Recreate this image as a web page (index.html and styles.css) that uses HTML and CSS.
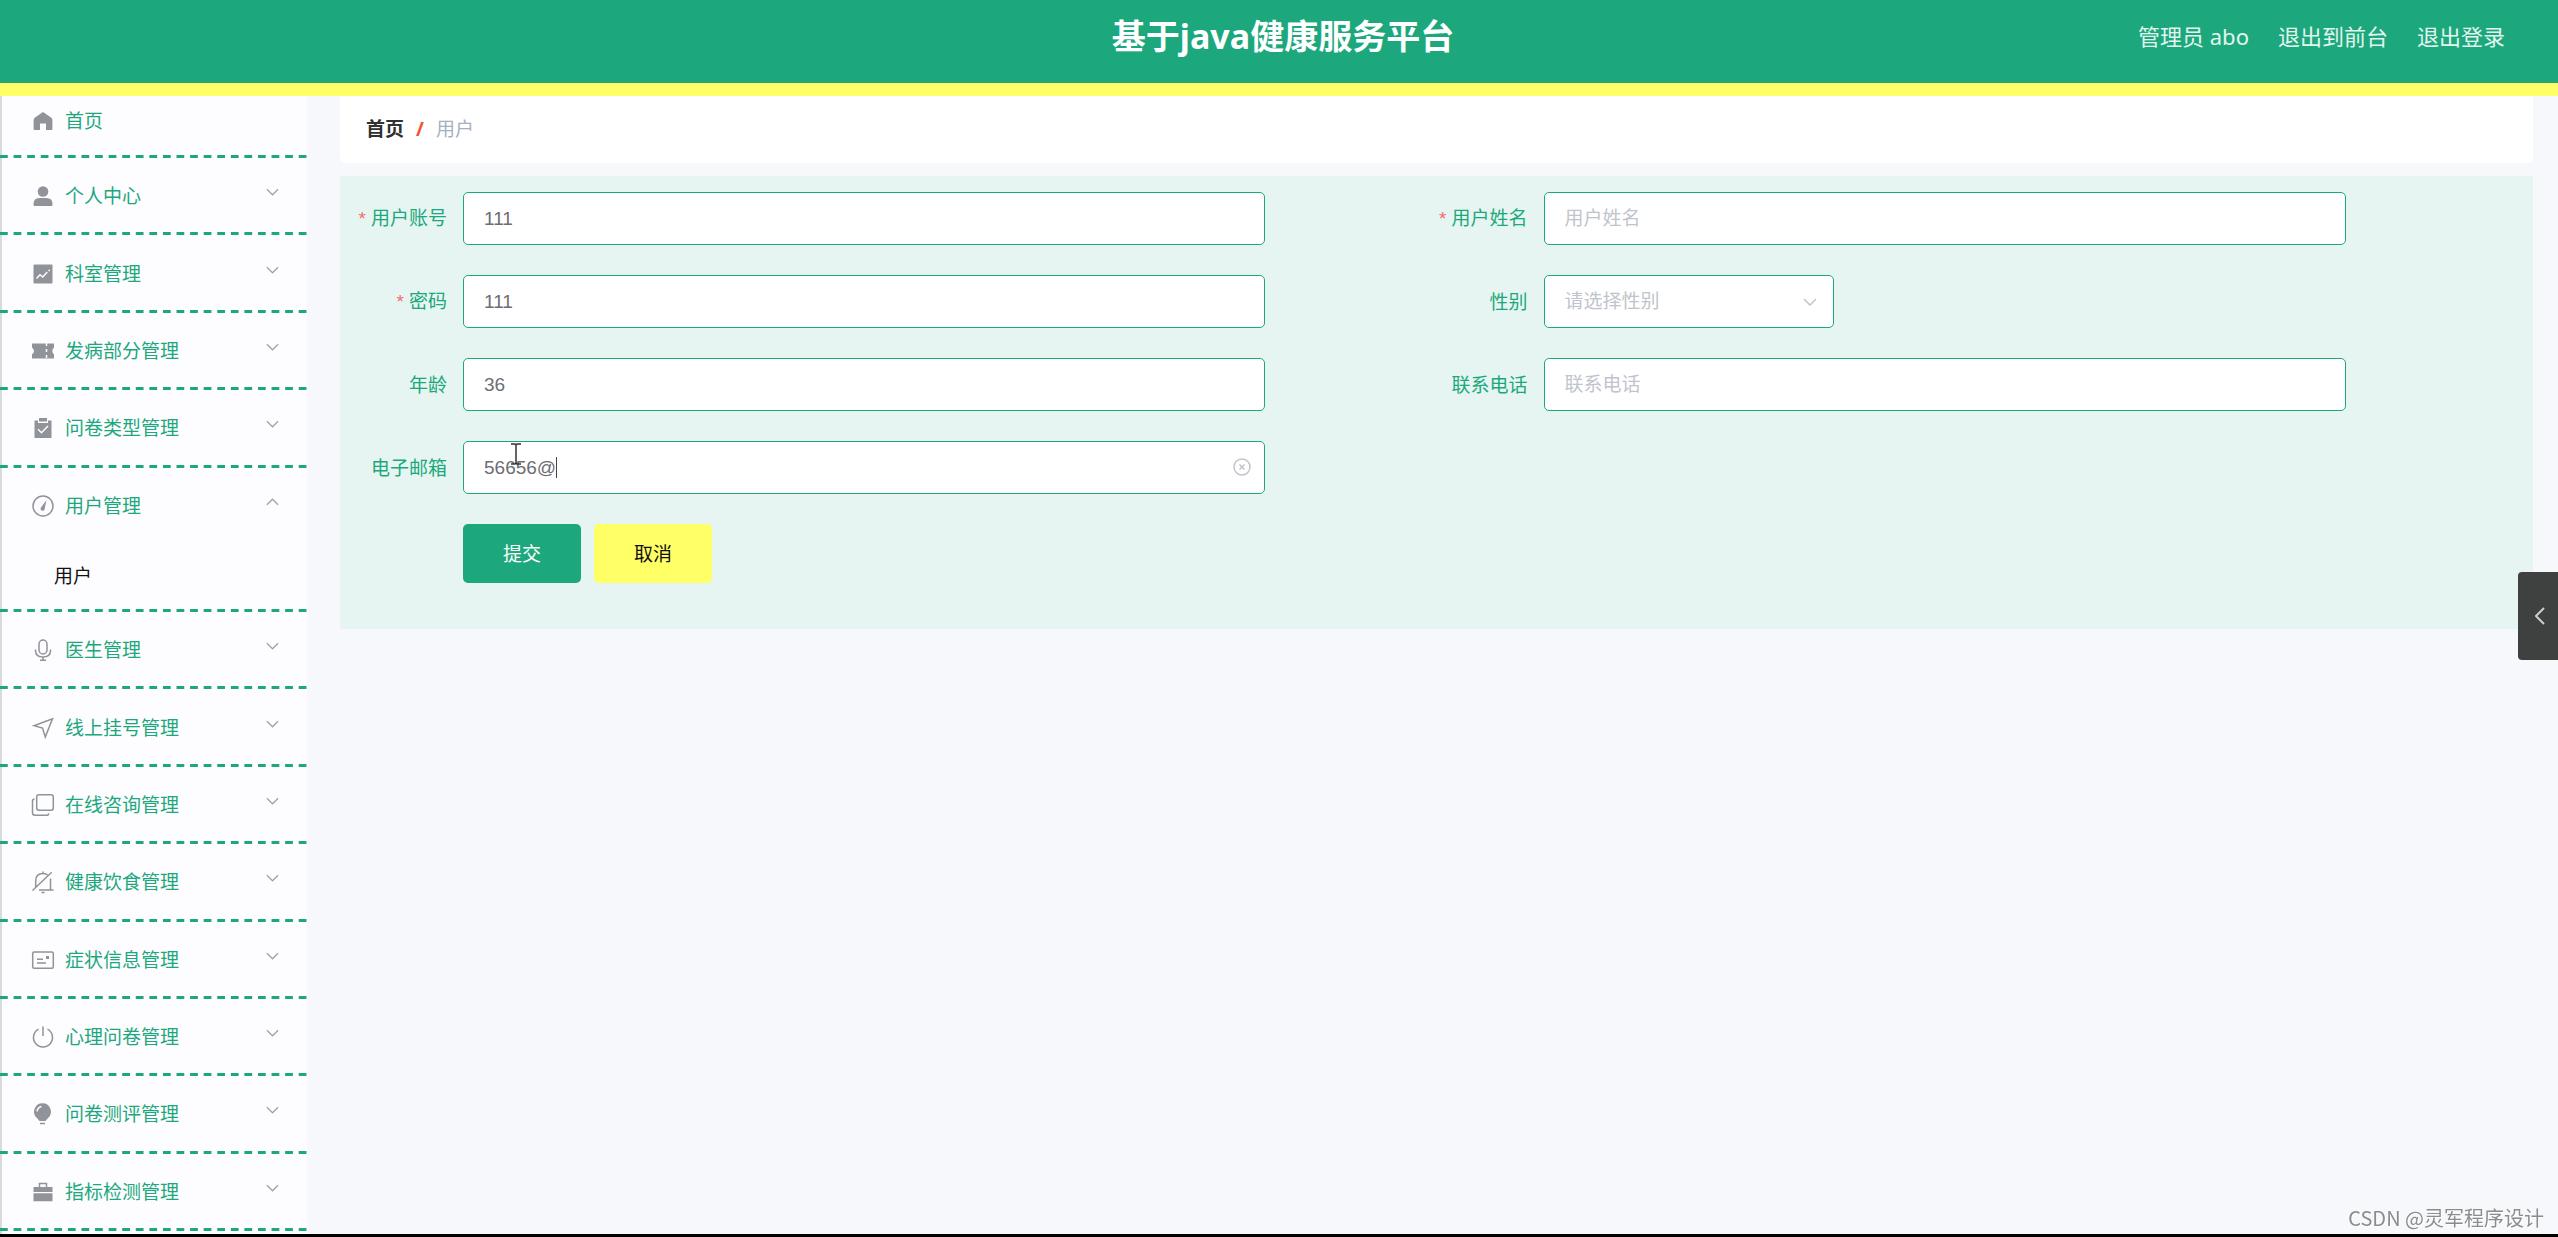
FILE: index.html
```html
<!DOCTYPE html>
<html lang="zh-CN">
  <head>
    <meta charset="utf-8">
    <title>基于java健康服务平台</title>
    <link rel="stylesheet" href="styles.css">
  </head>

  <body>

    <header class="navbar">
      <h1 class="title">基于java健康服务平台</h1>
      <div class="right-menu">
        <span>管理员 abo</span>
        <a href="#">退出到前台</a>
        <a href="#">退出登录</a>
      </div>
    </header>

    <div class="container">
      <nav class="sidebar">
        <ul class="menu">
          <li class="menu-item home">
            <a class="menu-title" href="#">
              <svg class="icon" viewBox="0 0 24 24"><path d="M12 3l-8 5.5q-1.4 1-1.4 2.5v9q0 1 1 1H9v-6.500h6V21h5.400q1 0 1-1v-9q0-1.500-1.400-2.500z"/></svg>
              <span>首页</span>
            </a>
          </li>
          <li class="menu-item">
            <button class="menu-title" type="button">
              <svg class="icon" viewBox="0 0 24 24"><circle cx="12" cy="7.500" r="5.300"/><path d="M2.500 20q0-6 6-6h7q6 0 6 6v1q0 1-1 1h-17q-1 0-1-1z"/></svg>
              <span>个人中心</span>
              <svg class="arrow" viewBox="0 0 14 8"><path d="M1 1l6 6 6-6"/></svg>
            </button>
          </li>
          <li class="menu-item">
            <button class="menu-title" type="button">
              <svg class="icon" viewBox="0 0 24 24"><rect x="2.500" y="2.500" width="19" height="19" rx="1"/><path class="cut" d="M5.500 16.500L9 12.700l2.700 2.300 4.600-5M17.500 8.800l1.300-.8"/></svg>
              <span>科室管理</span>
              <svg class="arrow" viewBox="0 0 14 8"><path d="M1 1l6 6 6-6"/></svg>
            </button>
          </li>
          <li class="menu-item">
            <button class="menu-title" type="button">
              <svg class="icon" viewBox="0 0 24 24"><path d="M1 4.500h22v4q-3.500 3.500 0 7v4H1v-4q4-3.500 0-7z"/><path class="cut" stroke-dasharray="3 3" d="M15.500 4v16"/></svg>
              <span>发病部分管理</span>
              <svg class="arrow" viewBox="0 0 14 8"><path d="M1 1l6 6 6-6"/></svg>
            </button>
          </li>
          <li class="menu-item">
            <button class="menu-title" type="button">
              <svg class="icon" viewBox="0 0 24 24"><path d="M3.500 4.500H7V7h10V4.500h3.500V22h-17zM8 2h8v3.500H8z"/><path class="cut" d="M7 13.300l3.500 3.500L17 10"/></svg>
              <span>问卷类型管理</span>
              <svg class="arrow" viewBox="0 0 14 8"><path d="M1 1l6 6 6-6"/></svg>
            </button>
          </li>
          <li class="menu-item open">
            <button class="menu-title" type="button" aria-expanded="true">
              <svg class="icon" viewBox="0 0 24 24"><circle class="line" cx="12" cy="12" r="10"/><path d="M15.500 6l-2 9.500a2 2 0 1 1-3.700-1.700z"/></svg>
              <span>用户管理</span>
              <svg class="arrow" viewBox="0 0 14 8"><path d="M1 7l6-6 6 6"/></svg>
            </button>
            <a class="submenu" href="#">用户</a>
          </li>
          <li class="menu-item">
            <button class="menu-title" type="button">
              <svg class="icon" viewBox="0 0 24 24"><g class="line"><rect x="8" y="2" width="8" height="14" rx="4"/><path d="M4.500 11.500v1q0 6.500 7.500 6.500t7.500-6.500v-1M12 19v3M9 22.300h6"/></g></svg>
              <span>医生管理</span>
              <svg class="arrow" viewBox="0 0 14 8"><path d="M1 1l6 6 6-6"/></svg>
            </button>
          </li>
          <li class="menu-item">
            <button class="menu-title" type="button">
              <svg class="icon" viewBox="0 0 24 24"><path class="line" d="M3 9.700L21.500 2.700 14.300 21 11.500 12z"/></svg>
              <span>线上挂号管理</span>
              <svg class="arrow" viewBox="0 0 14 8"><path d="M1 1l6 6 6-6"/></svg>
            </button>
          </li>
          <li class="menu-item">
            <button class="menu-title" type="button">
              <svg class="icon" viewBox="0 0 24 24"><g class="line"><rect x="5.700" y="1.700" width="16.600" height="15.600" rx="2.200"/><path d="M3.500 6q-2 .3-2 2.300v11.500q0 2.500 2.500 2.500h11.500q2 0 2.300-2"/></g></svg>
              <span>在线咨询管理</span>
              <svg class="arrow" viewBox="0 0 14 8"><path d="M1 1l6 6 6-6"/></svg>
            </button>
          </li>
          <li class="menu-item">
            <button class="menu-title" type="button">
              <svg class="icon" viewBox="0 0 24 24"><path class="line" d="M4.700 17.500V11q0-7.500 7.300-7.500 2.500 0 4.500 1.300M19.500 8.500V20M8 20h14.500M1.500 20.500L20.700 2.300M12 1.500v2M10.500 22.500h3"/></svg>
              <span>健康饮食管理</span>
              <svg class="arrow" viewBox="0 0 14 8"><path d="M1 1l6 6 6-6"/></svg>
            </button>
          </li>
          <li class="menu-item">
            <button class="menu-title" type="button">
              <svg class="icon" viewBox="0 0 24 24"><g class="line"><rect x="1.700" y="4" width="20.600" height="16.300" rx="1.500"/><path d="M6 11.300h6M6 15h9"/></g><rect x="15" y="8" width="3" height="3"/></svg>
              <span>症状信息管理</span>
              <svg class="arrow" viewBox="0 0 14 8"><path d="M1 1l6 6 6-6"/></svg>
            </button>
          </li>
          <li class="menu-item">
            <button class="menu-title" type="button">
              <svg class="icon" viewBox="0 0 24 24"><path class="line" d="M7.500 4.200a9.500 9.500 0 1 0 9 0M12 1.500V11"/></svg>
              <span>心理问卷管理</span>
              <svg class="arrow" viewBox="0 0 14 8"><path d="M1 1l6 6 6-6"/></svg>
            </button>
          </li>
          <li class="menu-item">
            <button class="menu-title" type="button">
              <svg class="icon" viewBox="0 0 24 24"><path d="M11.500 1.300a8.400 8.400 0 0 1 6 14.300L14.500 19h-6l-3-3.400a8.400 8.400 0 0 1 6-14.300zM9 20.800h5v1.500H9z"/><path class="cut" d="M6 9.500q.5-4 4.500-5"/></svg>
              <span>问卷测评管理</span>
              <svg class="arrow" viewBox="0 0 14 8"><path d="M1 1l6 6 6-6"/></svg>
            </button>
          </li>
          <li class="menu-item">
            <button class="menu-title" type="button">
              <svg class="icon" viewBox="0 0 24 24"><path d="M2.500 7h19v5h-19zM2.500 13.300h19v8h-19z"/><path class="line" d="M8.500 7V3.500h7V7"/></svg>
              <span>指标检测管理</span>
              <svg class="arrow" viewBox="0 0 14 8"><path d="M1 1l6 6 6-6"/></svg>
            </button>
          </li>
        </ul>
      </nav>

      <main class="main">
        <div class="breadcrumb">
          <a href="#">首页</a>
          <b>/</b>
          <span>用户</span>
        </div>

        <form class="user-form">
          <div class="form-item required">
            <label for="account">用户账号</label>
            <div class="field"><input id="account" type="text" value="111"></div>
          </div>
          <div class="form-item required">
            <label for="username">用户姓名</label>
            <div class="field"><input id="username" type="text" placeholder="用户姓名"></div>
          </div>
          <div class="form-item required">
            <label for="password">密码</label>
            <div class="field"><input id="password" type="text" value="111"></div>
          </div>
          <div class="form-item">
            <label for="gender">性别</label>
            <div class="field select">
              <select id="gender">
                <option value="">请选择性别</option>
                <option>男</option>
                <option>女</option>
              </select>
              <svg class="select-arrow" viewBox="0 0 14 8"><path d="M1 1l6 6 6-6"/></svg>
            </div>
          </div>
          <div class="form-item">
            <label for="age">年龄</label>
            <div class="field"><input id="age" type="text" value="36"></div>
          </div>
          <div class="form-item">
            <label for="phone">联系电话</label>
            <div class="field"><input id="phone" type="text" placeholder="联系电话"></div>
          </div>
          <div class="form-item">
            <label for="email">电子邮箱</label>
            <div class="field">
              <input id="email" type="text" value="56656@">
              <span class="caret"></span>
              <svg class="pointer" viewBox="0 0 10 22"><path d="M0 1h4l1 1 1-1h4M5 2v18M0 21h4l1-1 1 1h4"/></svg>
              <button class="clear" type="button" aria-label="清空">
                <svg viewBox="0 0 18 18"><circle cx="9" cy="9" r="8"/><path d="M6.500 6.500l5 5M11.500 6.500l-5 5"/></svg>
              </button>
            </div>
          </div>
          <div class="actions">
            <button class="btn submit" type="button">提交</button>
            <button class="btn cancel" type="button">取消</button>
          </div>
        </form>
      </main>
    </div>

    <button class="drawer" type="button" aria-label="展开">
      <svg viewBox="0 0 10 18"><path d="M9 1L1 9l8 8"/></svg>
    </button>
    <div class="watermark">CSDN @灵军程序设计</div>

  </body>
</html>
```

FILE: styles.css
```css
:root{
  --green: #1ca87c;
  --yellow: #ffff66;
  --gray: #909399;
  --light: #c0c4cc;
}

*{
  box-sizing: border-box;
}

body{
  margin: 0;
  min-height: 100vh;
  display: flex;
  flex-direction: column;
  background: #f6f8fc;
  border-bottom: 3px solid #000;
  font-family: "Noto Sans", "Noto Sans CJK SC", sans-serif;
  font-size: 19px;
  line-height: 28px;
}

a{
  color: inherit;
  text-decoration: none;
}

button, input, select{
  font: inherit;
  color: inherit;
}

button{
  border: 0;
  padding: 0;
  background: none;
  cursor: pointer;
}

/* header */
.navbar{
  display: grid;
  grid-template-columns: 1fr auto 1fr;
  align-items: center;
  height: 96px;
  padding: 0 53px 11px 61px;
  background: var(--green);
  border-bottom: 13px solid var(--yellow);
  color: #fff;
}

.title{
  grid-column: 2;
  margin: 0;
  font-size: 34px;
  line-height: 44px;
}

.right-menu{
  display: flex;
  justify-content: flex-end;
  gap: 29px;
  font-size: 22px;
  color: #e2f5ee;
}

.container{
  flex: 1;
  display: flex;
}

/* sidebar */
.sidebar{
  display: flex;
  width: 307px;
  padding-bottom: 3px;
  background: linear-gradient(90deg, #dadadd 2px, #fdfcff 2px);
}

.menu{
  flex: 1;
  display: flex;
  flex-direction: column;
  margin: 0;
  padding: 0;
  list-style: none;
}

.menu-item{
  flex: 1 0 3px;
  display: flex;
  flex-direction: column;
  padding-bottom: 3px;
  background: linear-gradient(90deg, var(--green) 8px, transparent 8px) 0 100% / calc((100% - 8px) / 22) 3px repeat-x;
}

.menu-item.home{
  flex: 0 0 62px;
}

.home .menu-title{
  padding-bottom: 12px;
}

.menu-item.open{
  flex-basis: 70px;
}

.menu-title{
  flex: 1;
  display: flex;
  align-items: center;
  gap: 10px;
  width: 100%;
  padding: 2px 28px 0 31px;
  color: var(--green);
  text-align: left;
}

.icon{
  width: 24px;
  height: 24px;
  fill: var(--gray);
}

.icon .line{
  fill: none;
  stroke: var(--gray);
  stroke-width: 1.5;
}

.icon .cut{
  fill: none;
  stroke: #fdfcff;
  stroke-width: 1.5;
}

.arrow{
  width: 13px;
  height: 8px;
  margin: 0 0 8px auto;
  fill: none;
  stroke: #a0a0a8;
  stroke-width: 1.3;
}

.submenu{
  padding: 20px 0 19px 54px;
  color: #111;
}

/* content */
.main{
  flex: 1;
  padding: 0 25px 0 33px;
}

.breadcrumb{
  display: flex;
  gap: 12px;
  padding: 19px 26px 20px;
  background: #fff;
  border-radius: 0 0 5px 5px;
  color: #a7aec4;
}

.breadcrumb a{
  color: #303133;
  font-weight: bold;
}

.breadcrumb b{
  color: #f0532d;
}

.user-form{
  display: grid;
  grid-template-columns: 1fr 1fr;
  row-gap: 30px;
  margin-top: 13px;
  padding: 16px 16px 46px;
  background: #e6f5f1;
}

.form-item{
  display: flex;
  align-items: center;
}

.form-item label{
  width: 107px;
  padding-right: 16px;
  color: var(--green);
  text-align: right;
  white-space: nowrap;
}

.required label::before{
  content: "*";
  margin-right: 5px;
  color: #f56c6c;
  font-family: "Liberation Sans", sans-serif;
}

.field{
  position: relative;
  flex: 1;
  max-width: 802px;
}

.field.select{
  max-width: 290px;
}

.field input, .field select{
  display: block;
  width: 100%;
  height: 53px;
  padding: 0 20px;
  border: 1px solid var(--green);
  border-radius: 5px;
  background: #fff;
  color: #6c6e73;
  font-family: "Liberation Sans", "Noto Sans CJK SC", sans-serif;
  outline: none;
}

.field select{
  appearance: none;
  color: var(--light);
}

.field input::placeholder{
  color: var(--light);
}

.select-arrow{
  position: absolute;
  top: 23px;
  right: 17px;
  width: 14px;
  height: 8px;
  fill: none;
  stroke: var(--light);
  stroke-width: 1.5;
}

.clear{
  position: absolute;
  top: 17px;
  right: 14px;
  width: 18px;
  height: 18px;
}

.clear svg{
  display: block;
  fill: none;
  stroke: var(--light);
  stroke-width: 1.5;
}

.caret{
  position: absolute;
  top: 16px;
  left: 93px;
  width: 1px;
  height: 21px;
  background: #444;
}

.pointer{
  position: absolute;
  top: 2px;
  left: 48px;
  width: 10px;
  height: 22px;
  fill: none;
  stroke: #333;
  stroke-width: 1.5;
}

.actions{
  grid-column: 1 / -1;
  display: flex;
  gap: 13px;
  padding-left: 107px;
}

.btn{
  width: 118px;
  height: 59px;
  border-radius: 5px;
}

.submit{
  background: var(--green);
  color: #fff;
}

.cancel{
  background: var(--yellow);
  color: #111;
}

/* floating parts */
.drawer{
  position: fixed;
  right: 0;
  top: 572px;
  display: grid;
  place-items: center;
  width: 40px;
  height: 88px;
  padding-left: 4px;
  background: #3f4140;
  border-radius: 4px 0 0 4px;
}

.drawer svg{
  width: 10px;
  height: 18px;
  fill: none;
  stroke: #ccc;
  stroke-width: 2;
}

.watermark{
  position: fixed;
  right: 14px;
  bottom: 5px;
  color: #8c8c8c;
  font-family: "Noto Sans CJK SC", sans-serif;
  font-size: 20px;
  text-shadow: 1px 1px 0 #fff;
}
```
